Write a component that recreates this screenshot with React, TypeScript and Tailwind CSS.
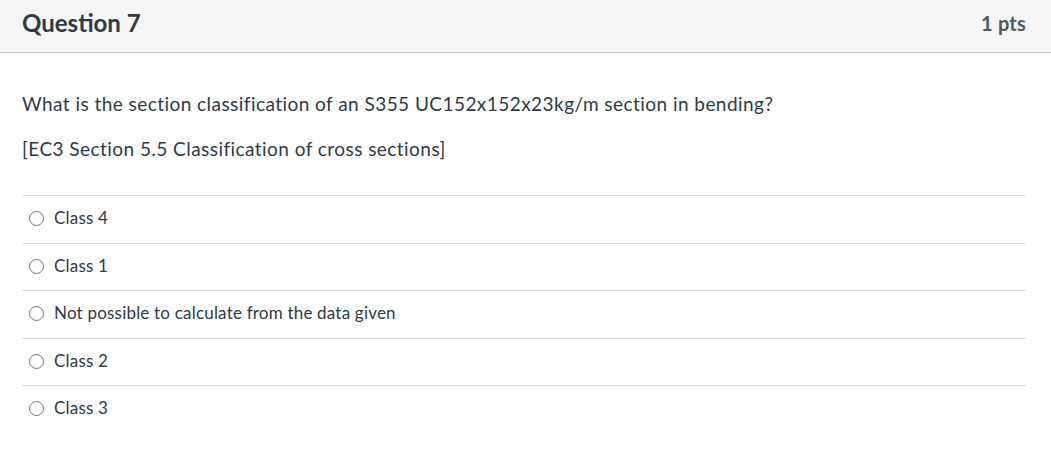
const answers = [
  "Class 4",
  "Class 1",
  "Not possible to calculate from the data given",
  "Class 2",
  "Class 3",
];

const App = () => {
  return (
    <div className="w-[1051px] h-[457px] bg-white font-['Lato',sans-serif] text-[#2d3b45]">
      <div className="flex items-start justify-between h-[53px] bg-[#f5f5f5] border-b border-[#c7cdd1] pl-[22px] pr-[25px]">
        <h2 className="mt-[11px] text-[24px] font-bold leading-[24px]">Question 7</h2>
        <div className="mt-[13px] text-[20px] font-bold text-[#4d5a63] leading-[20px] tracking-[0.2px]">
          1 pts
        </div>
      </div>
      <div className="pl-[22px] pr-[25px]">
        <p className="mt-[39px] text-[19px] leading-[24px] tracking-[0.45px]">
          What is the section classification of an S355 UC152x152x23kg/m section in bending?
        </p>
        <p className="mt-[21px] text-[19px] leading-[24px] tracking-[0.45px]">
          [EC3 Section 5.5 Classification of cross sections]
        </p>
        <div className="mt-[34px]">
          {answers.map((a, i) => (
            <div
              key={"answer-" + i}
              className="flex items-center h-[47.5px] pb-[3px] border-t border-[#dcdfe1]"
            >
              <span className="ml-[7px] mt-[2px] w-[15px] h-[15px] rounded-full border border-[#6b7780] bg-white" />
              <span className="ml-[10px] text-[17px] tracking-[0.2px] text-[#2d3b45]">{a}</span>
            </div>
          ))}
        </div>
      </div>
    </div>
  );
};

export default App;
